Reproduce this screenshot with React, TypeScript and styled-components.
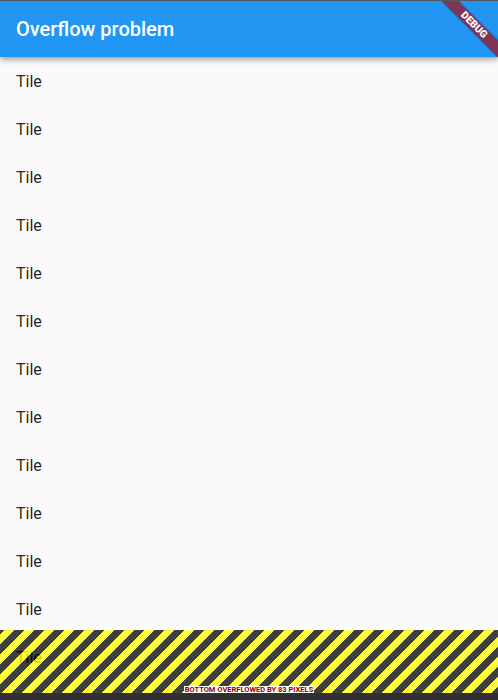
import React from "react";
import styled, { createGlobalStyle } from "styled-components";

const GlobalStyle = createGlobalStyle`
  html, body {
    margin: 0;
    padding: 0;
    background: #fafafa;
  }
  body {
    font-family: Roboto, "Noto Sans", "Liberation Sans", sans-serif;
  }
  * {
    box-sizing: border-box;
  }
`;

const Screen = styled.div`
  position: relative;
  width: 498px;
  height: 700px;
  display: flex;
  flex-direction: column;
  overflow: hidden;
  border-top: 1px solid #575757;
  background: #fafafa;
`;

const AppBar = styled.header`
  flex: none;
  height: 56px;
  display: flex;
  align-items: center;
  padding: 0 16px;
  background: #2196f3;
  position: relative;
  z-index: 1;
  box-shadow: 0 2px 4px -1px rgba(0, 0, 0, 0.2), 0 4px 5px 0 rgba(0, 0, 0, 0.14),
    0 1px 10px 0 rgba(0, 0, 0, 0.12);
`;

const Title = styled.h1`
  margin: 0;
  font-family: Roboto, "Noto Sans", sans-serif;
  font-size: 20px;
  font-weight: 500;
  color: #ffffff;
`;

const Body = styled.main`
  position: relative;
  flex: 1;
  overflow: hidden;
  background: #fafafa;
`;

const TileList = styled.ul`
  margin: 0;
  padding: 0;
  list-style: none;
  display: flex;
  flex-direction: column;
`;

const Tile = styled.li`
  flex: none;
  height: 48px;
  display: flex;
  align-items: center;
  padding: 0 16px;
  font-family: Roboto, "Noto Sans", sans-serif;
  font-size: 16px;
  color: rgba(0, 0, 0, 0.87);
`;

/* Hazard stripes painted over the part of the list that runs out of room */
const OverflowStripes = styled.div`
  position: absolute;
  left: 0;
  right: 0;
  bottom: 0;
  height: 63px;
  background-image: linear-gradient(
    135deg,
    rgba(0, 0, 0, 0.75) 12.5%,
    rgba(255, 255, 0, 0.75) 12.5%,
    rgba(255, 255, 0, 0.75) 37.5%,
    rgba(0, 0, 0, 0.75) 37.5%,
    rgba(0, 0, 0, 0.75) 62.5%,
    rgba(255, 255, 0, 0.75) 62.5%,
    rgba(255, 255, 0, 0.75) 87.5%,
    rgba(0, 0, 0, 0.75) 87.5%
  );
  background-size: 20px 20px;
  background-position: 0 0;
  display: flex;
  justify-content: center;
  align-items: flex-end;
`;

const OverflowLabel = styled.span`
  display: block;
  background: #ffffff;
  color: #900000;
  font-family: Roboto, "Noto Sans", sans-serif;
  font-size: 7.5px;
  font-weight: 700;
  line-height: 1;
  padding: 0 1px;
  white-space: nowrap;
`;

const Footer = styled.div`
  flex: none;
  height: 7px;
  background: #303030;
`;

/* Corner ribbon shown in debug builds */
const DebugBanner = styled.div`
  position: absolute;
  left: 434px;
  top: 18px;
  width: 80px;
  height: 12px;
  z-index: 2;
  transform: rotate(45deg);
  background: #7f3558;
  box-shadow: 0 0 2px rgba(0, 0, 0, 0.3);
  display: flex;
  align-items: center;
  justify-content: center;
  font-family: Roboto, "Noto Sans", sans-serif;
  font-size: 10.2px;
  font-weight: 900;
  line-height: 1;
  color: #ffffff;
`;

export default function App() {
  const tiles = Array.from({ length: 13 }, (_, i) => i);
  return (
    <>
      <GlobalStyle />
      <Screen>
        <AppBar>
          <Title>Overflow problem</Title>
        </AppBar>
        <Body>
          <TileList>
            {tiles.map((i) => (
              <Tile key={i}>Tile</Tile>
            ))}
          </TileList>
          <OverflowStripes>
            <OverflowLabel>BOTTOM OVERFLOWED BY 83 PIXELS</OverflowLabel>
          </OverflowStripes>
        </Body>
        <Footer />
        <DebugBanner>DEBUG</DebugBanner>
      </Screen>
    </>
  );
}
